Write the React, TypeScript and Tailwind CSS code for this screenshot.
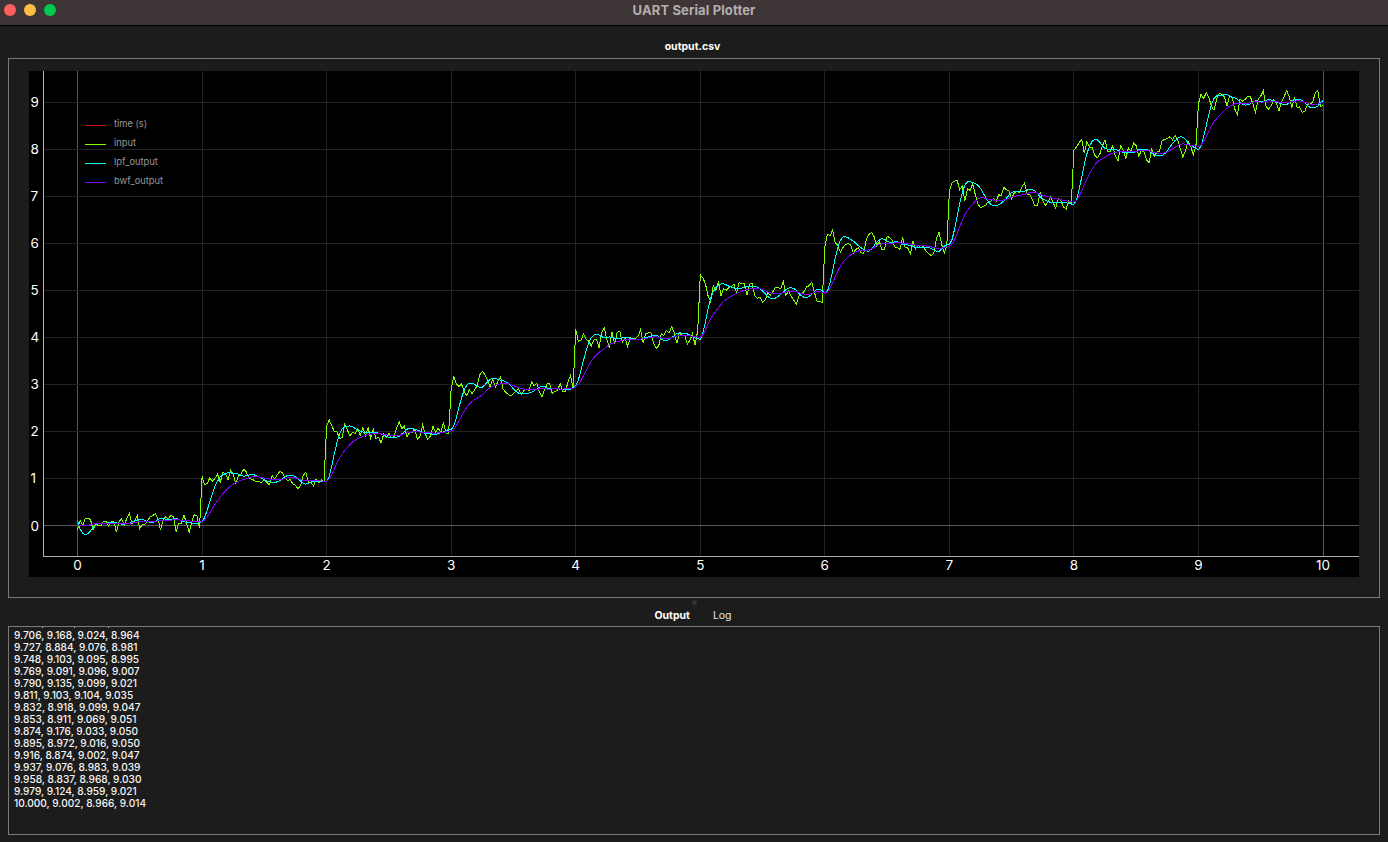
const DT = 10 / 480;
const N = 481;

const sx = (t: number) => 48.5 + t * 124.55;
const sy = (v: number) => 454.5 - v * 47.05;

function makeSeries() {
  let seed = 4127;
  const rnd = () => {
    seed = (seed * 16807) % 2147483647;
    return seed / 2147483647 - 0.5;
  };

  const input: number[] = [];
  let n = 0;
  for (let i = 0; i < N; i++) {
    const t = i * DT;
    const step = Math.min(Math.floor(t + 1e-6), 9);
    const since = t - Math.floor(t + 1e-6);
    n = 0.42 * n + rnd() * 0.42;
    const kick = step > 0 ? 0.07 * Math.exp(-since * 9) : 0.1 * Math.exp(-since * 40);
    input.push(step + n + kick);
  }

  // second order filters run over the input
  const run = (wn: number, z: number, y0: number, v0: number) => {
    const out: number[] = [];
    let y = y0;
    let v = v0;
    for (let i = 0; i < N; i++) {
      out.push(y);
      for (let k = 0; k < 8; k++) {
        const a = wn * wn * (input[i] - y) - 2 * z * wn * v;
        v += (a * DT) / 8;
        y += (v * DT) / 8;
      }
    }
    return out;
  };

  return { input, lpf: run(20, 0.55, 0.1, -10), bwf: run(13.5, 1, 0, 0) };
}

const series = makeSeries();

const toPoints = (values: number[]) =>
  values.map((v, i) => `${sx(i * DT).toFixed(1)},${sy(v).toFixed(1)}`).join(" ");

const LEGEND = [
  { name: "time (s)", color: "#d01010" },
  { name: "input", color: "#80ff00" },
  { name: "lpf_output", color: "#00ffff" },
  { name: "bwf_output", color: "#8000ff" },
];

const LOG_ROWS = [
  "9.706, 9.168, 9.024, 8.964",
  "9.727, 8.884, 9.076, 8.981",
  "9.748, 9.103, 9.095, 8.995",
  "9.769, 9.091, 9.096, 9.007",
  "9.790, 9.135, 9.099, 9.021",
  "9.811, 9.103, 9.104, 9.035",
  "9.832, 8.918, 9.099, 9.047",
  "9.853, 8.911, 9.069, 9.051",
  "9.874, 9.176, 9.033, 9.050",
  "9.895, 8.972, 9.016, 9.050",
  "9.916, 8.874, 9.002, 9.047",
  "9.937, 9.076, 8.983, 9.039",
  "9.958, 8.837, 8.968, 9.030",
  "9.979, 9.124, 8.959, 9.021",
  "10.000, 9.002, 8.966, 9.014",
];

const X_TICKS = [0, 1, 2, 3, 4, 5, 6, 7, 8, 9, 10];
const Y_TICKS = [0, 1, 2, 3, 4, 5, 6, 7, 8, 9];

function Plot() {
  return (
    <svg width={1330} height={506} className="block bg-black">
      {X_TICKS.map((t) => (
        <line
          key={t}
          x1={sx(t)}
          x2={sx(t)}
          y1={0}
          y2={485}
          stroke={t === 0 || t === 10 ? "#5a5a5a" : "#222222"}
          shapeRendering="crispEdges"
        />
      ))}
      {Y_TICKS.map((v) => (
        <line
          key={v}
          x1={14}
          x2={1330}
          y1={sy(v)}
          y2={sy(v)}
          stroke={v === 0 ? "#5a5a5a" : "#222222"}
          shapeRendering="crispEdges"
        />
      ))}
      <line x1={14.5} x2={14.5} y1={0} y2={485} stroke="#b0b0b0" shapeRendering="crispEdges" />
      <line x1={14} x2={1330} y1={485.5} y2={485.5} stroke="#b0b0b0" shapeRendering="crispEdges" />

      {Y_TICKS.map((v) => (
        <text key={v} x={1.5} y={sy(v) + 5} fill="#ffffff" className="text-[13.5px]">
          {v}
        </text>
      ))}
      {X_TICKS.map((t) => (
        <text key={t} x={sx(t)} y={499} textAnchor="middle" fill="#ffffff" className="text-[13.5px]">
          {t}
        </text>
      ))}

      <polyline points={toPoints(series.input)} fill="none" stroke="#80ff00" strokeWidth={1} shapeRendering="crispEdges" />
      <polyline points={toPoints(series.lpf)} fill="none" stroke="#00ffff" strokeWidth={1} shapeRendering="crispEdges" />
      <polyline points={toPoints(series.bwf)} fill="none" stroke="#8000ff" strokeWidth={1} shapeRendering="crispEdges" />

      {LEGEND.map((item, i) => (
        <g key={item.name}>
          <line
            x1={56}
            x2={77}
            y1={54.5 + i * 19}
            y2={54.5 + i * 19}
            stroke={item.color}
            shapeRendering="crispEdges"
          />
          <text x={85} y={56 + i * 19} fill="#999999" className="text-[9.3px]">
            {item.name}
          </text>
        </g>
      ))}
    </svg>
  );
}

export default function App() {
  return (
    <div className="h-[842px] flex flex-col bg-[#1c1c1c] font-[Inter,sans-serif] overflow-hidden">
      {/* Title bar */}
      <header className="relative h-[26px] shrink-0 bg-[#3e3536] border-b border-black flex items-center justify-center pb-1">
        <div className="absolute left-1 top-[4px] flex items-center gap-2">
          <span className="w-3 h-3 rounded-full bg-[#ff5f5f]" />
          <span className="w-3 h-3 rounded-full bg-[#ffbd44]" />
          <span className="w-3 h-3 rounded-full bg-[#00ca4e]" />
        </div>
        <span className="text-[13px] tracking-[0.01em] font-bold text-[#b4aeae]">UART Serial Plotter</span>
      </header>

      <main className="flex-1 flex flex-col px-2 pb-[7px]">
        <div className="h-[32px] shrink-0 flex items-center justify-center pt-[10px] pr-[3px] text-[10.5px] font-bold text-white">
          output.csv
        </div>

        <section className="h-[540px] shrink-0 border border-[#7a7a7a] pt-3 pl-5">
          <Plot />
        </section>

        {/* Splitter */}
        <div className="h-[8px] shrink-0 flex items-center justify-center">
          <span className="w-[5px] h-[5px] rounded-full bg-[#333333]" />
        </div>

        <nav className="h-[20px] shrink-0 flex items-center justify-center gap-[23px] pr-[2px] text-[10.5px] text-[#e8e8e8]">
          <span className="font-bold text-white">Output</span>
          <span>Log</span>
        </nav>

        <section className="relative flex-1 border border-[#7a7a7a] px-[5px] pt-[2px]">
          {/* tails of the commas of the row scrolled off above */}
          <span className="absolute left-[33px] top-0 w-px h-px bg-[#bbbbbb]" />
          <span className="absolute left-[65px] top-0 w-px h-px bg-[#bbbbbb]" />
          <span className="absolute left-[99px] top-0 w-px h-px bg-[#bbbbbb]" />
          <div className="text-[10.15px] leading-[12px] font-medium text-[#f5f5f5]">
            {LOG_ROWS.map((row) => (
              <div key={row}>{row}</div>
            ))}
          </div>
        </section>
      </main>
    </div>
  );
}
